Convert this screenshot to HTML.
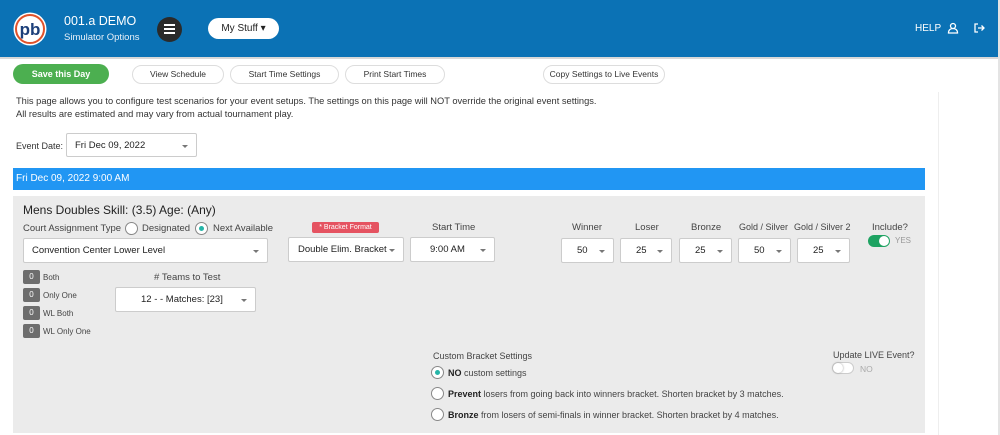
<!DOCTYPE html>
<html><head><style>
*{box-sizing:border-box;margin:0;padding:0}
body{width:1000px;height:435px;overflow:hidden;background:#fff;font-family:"Liberation Sans",sans-serif;color:#333;position:relative;font-size:10px}
.abs{position:absolute}
.hdr{left:0;top:0;width:998px;height:57px;background:#0b72b5}
.btn{position:absolute;top:65px;height:19px;border:1px solid #ddd;border-radius:10px;background:#fff;font-size:8.5px;text-align:center;line-height:17px;color:#333}
.sel{position:absolute;background:#fff;border:1px solid #ccc;border-radius:2px;height:25px;line-height:23px;font-size:9.5px;color:#222}
.sel:after{content:"";position:absolute;right:8px;top:11px;border:3px solid transparent;border-top:3px solid #777}
.lbl{position:absolute;font-size:9.5px;color:#444}
.badge{position:absolute;left:23px;width:17px;height:14px;background:#6d6d6d;border-radius:2px;color:#fff;font-size:8px;text-align:center;line-height:14px}
.bl{position:absolute;left:43px;font-size:8px;color:#444}
.radio{position:absolute;width:13px;height:13px;border:1px solid #888;border-radius:50%;background:#fff}
.radio.on:after{content:"";position:absolute;left:3px;top:3px;width:5px;height:5px;border-radius:50%;background:#26b5a8}
</style></head><body>
<div class="abs hdr"></div>
<div class="abs" style="left:998px;top:0;width:2px;height:435px;background:#e4e4e4"></div>
<svg class="abs" style="left:13px;top:12px" width="34" height="34" viewBox="0 0 34 34"><circle cx="17" cy="17" r="16.5" fill="#fff"/><circle cx="17" cy="17" r="14" fill="none" stroke="#e0522b" stroke-width="2"/><text x="17" y="23" text-anchor="middle" font-family="Liberation Sans" font-weight="bold" font-size="17" fill="#1c3f7a">pb</text></svg>
<div class="abs" style="left:64px;top:14px;color:#fff;font-size:12.5px">001.a DEMO</div>
<div class="abs" style="left:64px;top:32px;color:#e8f0f8;font-size:9.5px">Simulator Options</div>
<div class="abs" style="left:157px;top:17px;width:25px;height:25px;border-radius:50%;background:#2a2a2a"></div>
<div class="abs" style="left:164px;top:24px;width:11px;height:2px;background:#fff;box-shadow:0 4px 0 #fff,0 8px 0 #fff"></div>
<div class="abs" style="left:208px;top:18px;width:71px;height:21px;border-radius:11px;background:#fff;font-size:10px;text-align:center;line-height:21px;color:#222">My Stuff ▾</div>
<div class="abs" style="left:915px;top:23px;color:#fff;font-size:10px">HELP</div>
<svg class="abs" style="left:947px;top:22px" width="12" height="12" viewBox="0 0 12 12" fill="none" stroke="#fff" stroke-width="1.3"><circle cx="6" cy="4" r="2.5"/><path d="M1.5 11h9c0-3-2-4.5-4.5-4.5S1.5 8 1.5 11z"/></svg>
<svg class="abs" style="left:973px;top:22px" width="12" height="12" viewBox="0 0 12 12" fill="none" stroke="#fff" stroke-width="1.3"><path d="M5 2H2v8h3M5 6h6M8.5 3.5 11 6 8.5 8.5"/></svg>
<div class="abs" style="left:0;top:57px;width:998px;height:2px;background:#d8d8d8"></div>
<div class="abs" style="left:13px;top:64px;width:96px;height:20px;border-radius:10px;background:#4caf50;color:#fff;font-size:9px;font-weight:bold;text-align:center;line-height:20px">Save this Day</div>
<div class="btn" style="left:132px;width:92px">View Schedule</div>
<div class="btn" style="left:230px;width:109px">Start Time Settings</div>
<div class="btn" style="left:345px;width:100px">Print Start Times</div>
<div class="btn" style="left:543px;width:122px">Copy Settings to Live Events</div>
<div class="abs" style="left:938px;top:92px;width:1px;height:343px;background:#eee"></div>
<div class="abs" style="left:16px;top:95px;font-size:9.3px;line-height:12.5px;color:#333">This page allows you to configure test scenarios for your event setups. The settings on this page will NOT override the original event settings.<br>All results are estimated and may vary from actual tournament play.</div>
<div class="abs" style="left:16px;top:141px;font-size:9px">Event Date:</div>
<div class="sel" style="left:66px;top:133px;width:131px;height:24px;padding-left:8px;font-size:9.5px">Fri Dec 09, 2022</div>
<div class="abs" style="left:13px;top:168px;width:912px;height:22px;background:#2196f3;color:#fff;font-size:10px;line-height:22px;padding-left:3px">Fri Dec 09, 2022 9:00 AM</div>
<div class="abs" style="left:13px;top:196px;width:912px;height:237px;background:#ebebeb"></div>
<div class="abs" style="left:23px;top:203px;font-size:12px;color:#222">Mens Doubles Skill: (3.5) Age: (Any)</div>
<div class="lbl" style="left:23px;top:223px">Court Assignment Type</div>
<div class="radio" style="left:125px;top:222px"></div>
<div class="lbl" style="left:142px;top:223px">Designated</div>
<div class="radio on" style="left:195px;top:222px"></div>
<div class="lbl" style="left:213px;top:223px">Next Available</div>
<div class="sel" style="left:23px;top:238px;width:245px;padding-left:8px">Convention Center Lower Level</div>
<div class="abs" style="left:312px;top:222px;width:67px;height:11px;background:#e55361;border-radius:2px;color:#fff;font-size:7px;text-align:center;line-height:11px">* Bracket Format</div>
<div class="lbl" style="left:432px;top:222px">Start Time</div>
<div class="sel" style="left:288px;top:237px;width:116px;padding-left:9px">Double Elim. Bracket</div>
<div class="sel" style="left:410px;top:237px;width:85px;padding-left:19px">9:00 AM</div>
<div class="lbl" style="left:572px;top:222px">Winner</div>
<div class="lbl" style="left:635px;top:222px">Loser</div>
<div class="lbl" style="left:691px;top:222px">Bronze</div>
<div class="lbl" style="left:739px;top:222px;font-size:9px">Gold / Silver</div>
<div class="lbl" style="left:794px;top:222px;font-size:9px">Gold / Silver 2</div>
<div class="sel" style="left:561px;top:238px;width:53px;padding-left:15px">50</div>
<div class="sel" style="left:620px;top:238px;width:52px;padding-left:15px">25</div>
<div class="sel" style="left:679px;top:238px;width:53px;padding-left:15px">25</div>
<div class="sel" style="left:738px;top:238px;width:53px;padding-left:15px">50</div>
<div class="sel" style="left:797px;top:238px;width:53px;padding-left:15px">25</div>
<div class="lbl" style="left:872px;top:222px">Include?</div>
<div class="abs" style="left:868px;top:235px;width:22px;height:12px;border-radius:6px;background:#1ea362"></div>
<div class="abs" style="left:879px;top:236px;width:10px;height:10px;border-radius:50%;background:#fff"></div>
<div class="abs" style="left:895px;top:236px;font-size:8px;color:#999">YES</div>
<div class="badge" style="top:270px">0</div><div class="bl" style="top:273px">Both</div>
<div class="badge" style="top:288px">0</div><div class="bl" style="top:291px">Only One</div>
<div class="badge" style="top:306px">0</div><div class="bl" style="top:309px">WL Both</div>
<div class="badge" style="top:324px">0</div><div class="bl" style="top:327px">WL Only One</div>
<div class="lbl" style="left:154px;top:272px">#&nbsp;Teams to Test</div>
<div class="sel" style="left:115px;top:287px;width:141px;padding-left:25px">12 - - Matches: [23]</div>
<div class="lbl" style="left:433px;top:351px;font-size:9px">Custom Bracket Settings</div>
<div class="radio on" style="left:431px;top:366px"></div>
<div class="lbl" style="left:448px;top:368px;font-size:9px"><b style="color:#222">NO</b> custom settings</div>
<div class="radio" style="left:431px;top:387px"></div>
<div class="lbl" style="left:448px;top:389px;font-size:9px"><b style="color:#222">Prevent</b> losers from going back into winners bracket. Shorten bracket by 3 matches.</div>
<div class="radio" style="left:431px;top:408px"></div>
<div class="lbl" style="left:448px;top:410px;font-size:9px"><b style="color:#222">Bronze</b> from losers of semi-finals in winner bracket. Shorten bracket by 4 matches.</div>
<div class="lbl" style="left:833px;top:350px;font-size:9px">Update LIVE Event?</div>
<div class="abs" style="left:832px;top:362px;width:22px;height:12px;border-radius:6px;background:#fff;border:1px solid #ccc"></div>
<div class="abs" style="left:833px;top:363px;width:10px;height:10px;border-radius:50%;background:#fff;box-shadow:0 0 2px #999"></div>
<div class="abs" style="left:860px;top:364px;font-size:8.5px;color:#aaa">NO</div>
</body></html>
